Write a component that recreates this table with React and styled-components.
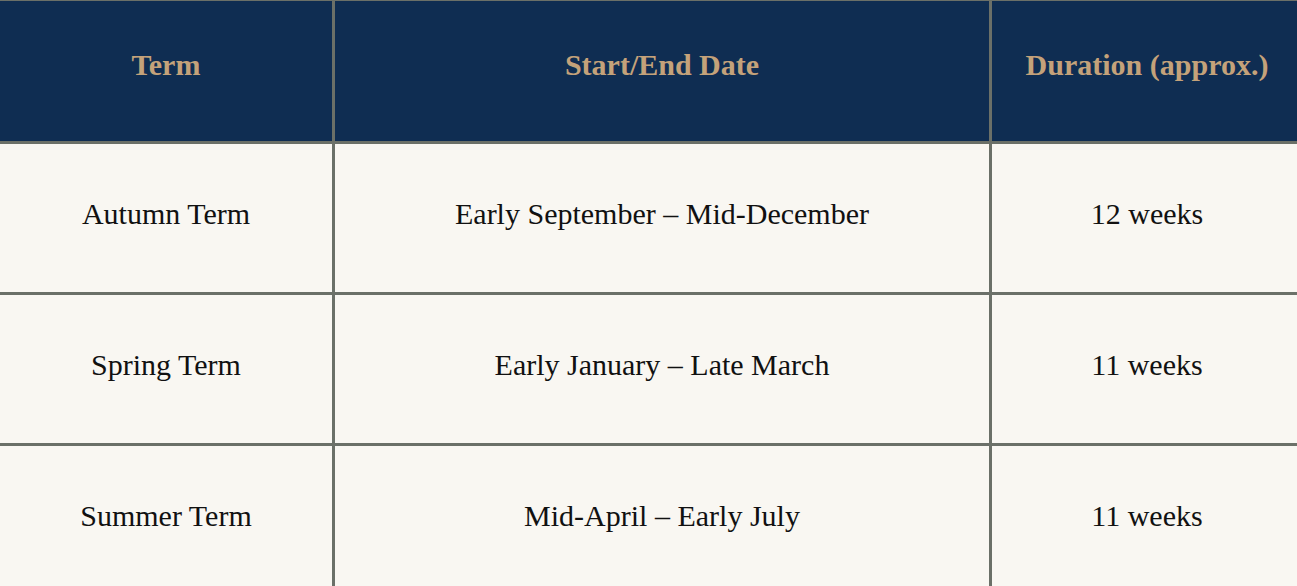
import React from "react";
import styled, { createGlobalStyle } from "styled-components";

const Global = createGlobalStyle`
  html, body { margin: 0; padding: 0; background: #f9f7f2; overflow: hidden; }
  body { font-family: "Liberation Serif", "Times New Roman", serif; }
`;

const Grid = styled.div`
  display: grid;
  grid-template-columns: 332px 654px 310px;
  grid-auto-rows: 148px;
  grid-template-rows: 140px;
  gap: 3px;
  padding: 3px;
  background: #6b7068;
  margin: -2px 0 0 -3px;
  width: max-content;
`;

const HeadCell = styled.div`
  background: #0f2d52;
  color: #c4a27a;
  font-weight: 700;
  font-size: 30px;
  display: flex;
  align-items: center;
  justify-content: center;
  padding-bottom: 12px;
  box-sizing: border-box;
`;

const Cell = styled.div`
  background: #f9f7f2;
  color: #111;
  font-size: 30px;
  display: flex;
  align-items: center;
  justify-content: center;
  padding-bottom: 8px;
  box-sizing: border-box;
`;

const headers = ["Term", "Start/End Date", "Duration (approx.)"];
const rows = [
  ["Autumn Term", "Early September – Mid-December", "12 weeks"],
  ["Spring Term", "Early January – Late March", "11 weeks"],
  ["Summer Term", "Mid-April – Early July", "11 weeks"],
];

export default function App() {
  return (
    <>
      <Global />
      <Grid>
        {headers.map((h) => (
          <HeadCell key={h}>{h}</HeadCell>
        ))}
        {rows.map((r) =>
          r.map((c, i) => <Cell key={r[0] + i}>{c}</Cell>)
        )}
      </Grid>
    </>
  );
}
